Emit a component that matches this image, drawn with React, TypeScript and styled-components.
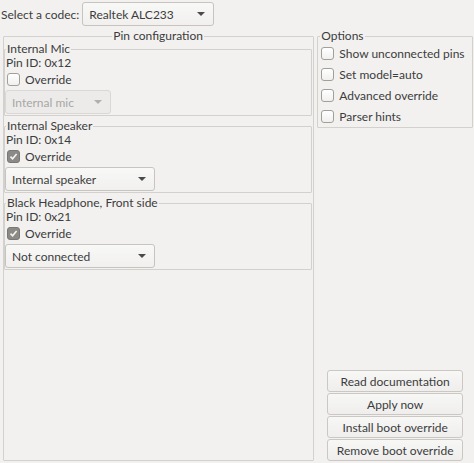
import React from "react";
import styled, {createGlobalStyle} from "styled-components";

const TEXT = "#3c3c3c";
const FRAME_BORDER = "#d3d1cd";

const GlobalStyle = createGlobalStyle`
  html, body {
    margin: 0;
    padding: 0;
    background: #f2f1f0;
  }
  body {
    font-family: Lato, "Open Sans", "DejaVu Sans", sans-serif;
    font-size: 12px;
    color: ${TEXT};
  }
`

const Window = styled.div`
  display: flex;
  flex-direction: column;
  height: 463px;
  box-sizing: border-box;
  padding: 2px 1px 2px 3px;
  white-space: nowrap;
`

const CodecRow = styled.div`
  display: flex;
  align-items: center;
  height: 24px;
  margin-left: -2px;
  gap: 3px;
`

const Main = styled.div`
  flex: 1;
  display: flex;
  gap: 3px;
  margin-top: 3px;
`

const Frame = styled.fieldset`
  margin: 0;
  padding: 0;
  min-width: 0;
  border: 1px solid ${FRAME_BORDER};
  border-radius: 1px;
  display: flex;
  flex-direction: column;
`

const FrameLabel = styled.legend<{ $center?: boolean }>`
  padding: 0 1px;
  height: 14px;
  line-height: 14px;
  margin-left: ${p => p.$center ? "auto" : "1px"};
  margin-right: ${p => p.$center ? "auto" : "0"};
`

const PinColumn = styled(Frame)`
  width: 312px;
  box-sizing: border-box;
  padding-right: 1px;
`

const PinFrame = styled(Frame)`
  padding-bottom: 1px;
  margin-top: 3px;

  &:first-of-type {
    margin-top: -1px;
  }
`

const PinText = styled.div`
  height: 14px;
  line-height: 14px;
  padding-left: 1px;
`

const CheckRow = styled.label<{ $height: number }>`
  display: flex;
  align-items: center;
  gap: 5px;
  height: ${p => p.$height}px;
  padding-left: 2px;
`

const Box = styled.span<{ $checked?: boolean }>`
  flex: none;
  width: 11px;
  height: 11px;
  border: 1px solid ${p => p.$checked ? "#7a7874" : "#a29f9a"};
  border-radius: 3px;
  background: ${p => p.$checked ? "#8c8a86" : "linear-gradient(#ffffff, #f1f0ef)"};
  display: flex;
  align-items: center;
  justify-content: center;
`

const Combo = styled.div<{ $width: number; $disabled?: boolean }>`
  width: ${p => p.$width}px;
  height: 24px;
  box-sizing: border-box;
  display: flex;
  align-items: center;
  justify-content: space-between;
  padding: 0 8px 0 6px;
  border: 1px solid ${p => p.$disabled ? "#dad8d5" : "#c7c4c0"};
  border-radius: 3px;
  background: ${p => p.$disabled ? "#ecebea" : "linear-gradient(#f8f8f7, #f1f0ef)"};
  color: ${p => p.$disabled ? "#a8a7a5" : TEXT};
`

const PinCombo = styled(Combo)`
  margin-top: 2px;
`

const Arrow = styled.span<{ $disabled?: boolean }>`
  width: 0;
  height: 0;
  border-left: 4px solid transparent;
  border-right: 4px solid transparent;
  border-top: 4px solid ${p => p.$disabled ? "#b0afad" : "#4a4a4a"};
`

const SideColumn = styled.div`
  width: 156px;
  display: flex;
  flex-direction: column;
`

const OptionsFrame = styled(Frame)`
  padding-left: 1px;
`

const ButtonStack = styled.div`
  margin-top: auto;
  display: flex;
  flex-direction: column;
  align-items: center;
  gap: 1px;
`

const Button = styled.button`
  width: 136px;
  height: 22px;
  margin: 0;
  padding: 0;
  border: 1px solid #cbc8c4;
  border-radius: 3px;
  background: linear-gradient(#f7f7f6, #efeeed);
  font: inherit;
  color: ${TEXT};
`

const Check: React.FC<{ checked?: boolean }> = ({checked}) => (
    <Box $checked={checked}>
        {checked && (
            <svg width="9" height="9" viewBox="0 0 9 9">
                <path d="M1.5 4.6 L3.6 6.7 L7.6 2" fill="none" stroke="#f4f4f3" strokeWidth="1.6"/>
            </svg>
        )}
    </Box>
)

interface Pin {
    name: string;
    id: string;
    override: boolean;
    value: string;
    width: number;
}

const pins: Pin[] = [
    {name: "Internal Mic", id: "0x12", override: false, value: "Internal mic", width: 106},
    {name: "Internal Speaker", id: "0x14", override: true, value: "Internal speaker", width: 150},
    {name: "Black Headphone, Front side", id: "0x21", override: true, value: "Not connected", width: 150},
]

const options = ["Show unconnected pins", "Set model=auto", "Advanced override", "Parser hints"];
const actions = ["Read documentation", "Apply now", "Install boot override", "Remove boot override"];

const App: React.FC = () => {
    return (
        <>
            <GlobalStyle/>
            <Window>
                <CodecRow>
                    <span>Select a codec:</span>
                    <Combo $width={132}>
                        <span>Realtek ALC233</span>
                        <Arrow/>
                    </Combo>
                </CodecRow>
                <Main>
                    <PinColumn>
                        <FrameLabel $center>Pin configuration</FrameLabel>
                        {pins.map(pin => (
                            <PinFrame key={pin.id}>
                                <FrameLabel>{pin.name}</FrameLabel>
                                <PinText>Pin ID: {pin.id}</PinText>
                                <CheckRow $height={18}>
                                    <Check checked={pin.override}/>
                                    <span>Override</span>
                                </CheckRow>
                                <PinCombo $width={pin.width} $disabled={!pin.override}>
                                    <span>{pin.value}</span>
                                    <Arrow $disabled={!pin.override}/>
                                </PinCombo>
                            </PinFrame>
                        ))}
                    </PinColumn>
                    <SideColumn>
                        <OptionsFrame>
                            <FrameLabel>Options</FrameLabel>
                            {options.map(o => (
                                <CheckRow key={o} $height={21}>
                                    <Check/>
                                    <span>{o}</span>
                                </CheckRow>
                            ))}
                        </OptionsFrame>
                        <ButtonStack>
                            {actions.map(a => <Button key={a}>{a}</Button>)}
                        </ButtonStack>
                    </SideColumn>
                </Main>
            </Window>
        </>
    )
}

export default App;
